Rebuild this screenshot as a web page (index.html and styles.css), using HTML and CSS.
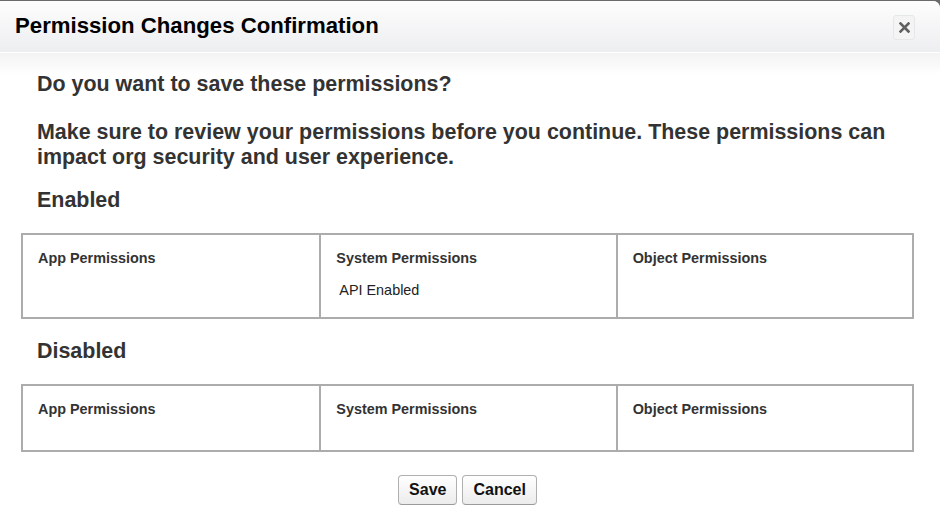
FILE: index.html
```html
<!DOCTYPE html>
<html lang="en">
<head>
    <meta charset="UTF-8">
    <meta name="viewport" content="width=device-width, initial-scale=1.0">
    <title>Permission Changes Confirmation</title>
    <link rel="stylesheet" href="styles.css">
</head>
<body>
    <div class="dialog">
        <div class="dialog-header">
            <h2 class="dialog-title">Permission Changes Confirmation</h2>
            <button class="close-btn" type="button" title="Close">
                <svg width="11" height="11" viewBox="0 0 11 11">
                    <path d="M1.5 1.5 L9.5 9.5 M9.5 1.5 L1.5 9.5" stroke="#5f5f5f" stroke-width="2.6" stroke-linecap="square"/>
                </svg>
            </button>
        </div>
        <div class="dialog-body">
            <p class="question">Do you want to save these permissions?</p>
            <p class="notice">Make sure to review your permissions before you continue. These permissions can impact org security and user experience.</p>

            <h3 class="section-title">Enabled</h3>
            <div class="perm-table">
                <div class="perm-col">
                    <div class="perm-head">App Permissions</div>
                    <ul class="perm-list"></ul>
                </div>
                <div class="perm-col">
                    <div class="perm-head">System Permissions</div>
                    <ul class="perm-list">
                        <li>API Enabled</li>
                    </ul>
                </div>
                <div class="perm-col">
                    <div class="perm-head">Object Permissions</div>
                    <ul class="perm-list"></ul>
                </div>
            </div>

            <h3 class="section-title">Disabled</h3>
            <div class="perm-table">
                <div class="perm-col">
                    <div class="perm-head">App Permissions</div>
                    <ul class="perm-list"></ul>
                </div>
                <div class="perm-col">
                    <div class="perm-head">System Permissions</div>
                    <ul class="perm-list"></ul>
                </div>
                <div class="perm-col">
                    <div class="perm-head">Object Permissions</div>
                    <ul class="perm-list"></ul>
                </div>
            </div>

            <div class="actions">
                <button class="btn" type="button">Save</button>
                <button class="btn" type="button">Cancel</button>
            </div>
        </div>
    </div>
</body>
</html>
```

FILE: styles.css
```css
* {
    margin: 0;
    padding: 0;
    box-sizing: border-box;
    font-family: 'Liberation Sans', Arial, sans-serif;
}

html, body {
    height: 100%;
}

body {
    background-color: #6a6a6a;
    padding-top: 1px;
    overflow: hidden;
}

.dialog {
    min-height: 100%;
    background: linear-gradient(#f3f3f3, #ffffff 22px) 0 52px / 100% 100% no-repeat, #ffffff;
    border-top-right-radius: 7px;
}

.dialog-header {
    height: 52px;
    display: flex;
    align-items: center;
    justify-content: space-between;
    padding: 0 25px 0 15px;
    background: linear-gradient(#fdfdfd, #edeef0);
    border-bottom: 1px solid #ffffff;
    border-top-right-radius: 7px;
}

.dialog-title {
    font-size: 22.2px;
    font-weight: bold;
    color: #000;
    margin-top: -1px;
}

.close-btn {
    width: 22px;
    height: 25px;
    display: flex;
    align-items: center;
    justify-content: center;
    background: #f4f4f5;
    border: 1px solid #e6e7e8;
    border-radius: 3px;
    cursor: pointer;
    margin-top: 1px;
}

.dialog-body {
    padding: 19px 26px 0 21px;
    color: #333;
}

.question,
.notice,
.section-title {
    font-size: 21.45px;
    line-height: 25px;
    font-weight: bold;
    padding-left: 16px;
}

.question {
    margin-bottom: 23px;
}

.notice {
    margin-bottom: 18px;
}

.section-title {
    margin-bottom: 20px;
}

.perm-table {
    display: grid;
    grid-template-columns: repeat(3, 1fr);
    border: 2px solid #acacac;
    margin-bottom: 20px;
}

.perm-col {
    padding: 14px 15px 18px 15px;
}

.perm-col + .perm-col {
    border-left: 2px solid #acacac;
}

.perm-head {
    font-size: 14.4px;
    line-height: 18px;
    font-weight: bold;
    color: #333;
}

.perm-list {
    list-style: none;
    padding-top: 14px;
}

.perm-list li {
    font-size: 14.4px;
    line-height: 18px;
    color: #222;
    padding-left: 3px;
}

.actions {
    display: flex;
    justify-content: center;
    gap: 5px;
    margin-top: 23px;
}

.btn {
    height: 30px;
    padding: 0 10px;
    font-size: 16px;
    font-weight: bold;
    color: #111;
    background: linear-gradient(#ffffff, #ececec);
    border: 1px solid #b0b0b0;
    border-bottom-color: #9a9a9a;
    border-radius: 4px;
    cursor: pointer;
}

.btn:hover {
    background: linear-gradient(#ffffff, #e2e2e2);
}
```
